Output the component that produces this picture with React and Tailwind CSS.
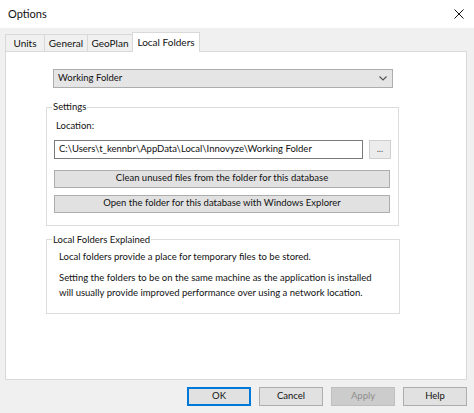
import React from 'react'

const font = { fontFamily: 'Lato, "Noto Sans", sans-serif' }

const Tab = ({ label, active, w }) => (
  <div
    className={
      active
        ? `${w} h-[20px] flex items-center justify-center bg-white border border-[#d9d9d9] border-b-0 -mb-px z-10 relative text-[10px]`
        : `${w} h-[17px] flex items-center justify-center bg-[#f0f0f0] border border-[#d9d9d9] border-b-0 -mr-px text-[10px]`
    }
  >
    {label}
  </div>
)

const Btn = ({ children, className = '' }) => (
  <div
    className={`h-[17px] flex items-center justify-center bg-[#e1e1e1] border border-[#adadad] ${className}`}
  >
    {children}
  </div>
)

const App = () => {
  return (
    <div
      className="w-[474px] h-[413px] bg-[#f0f0f0] text-[9.5px] text-[#111] overflow-hidden flex flex-col"
      style={font}
    >
      {/* title bar */}
      <div className="h-[28px] bg-white flex items-center justify-between pl-[8px] pr-[10px] shrink-0">
        <span className="text-[11px]">Options</span>
        <svg width="10" height="10" viewBox="0 0 10 10">
          <path d="M0.5 0.5 L9.5 9.5 M9.5 0.5 L0.5 9.5" stroke="#111" strokeWidth="1" />
        </svg>
      </div>

      {/* tabs */}
      <div className="flex items-end ml-[5px] mt-[5px] h-[18px]">
        <Tab label="Units" w="w-[40px]" />
        <Tab label="General" w="w-[44px]" />
        <Tab label="GeoPlan" w="w-[46px]" />
        <Tab label="Local Folders" w="w-[68px]" active />
      </div>

      {/* panel */}
      <div className="ml-[5px] w-[462px] h-[329px] bg-white border border-[#d9d9d9] pl-[40px] pt-[17px]">
        <div className="ml-[7px] w-[340px] h-[19px] bg-[#e5e5e5] border border-[#adadad] flex items-center justify-between pl-[4px] pr-[5px]">
          <span>Working Folder</span>
          <svg width="8" height="5" viewBox="0 0 8 5">
            <path d="M0.5 0.5 L4 4 L7.5 0.5" stroke="#555" strokeWidth="1.2" fill="none" />
          </svg>
        </div>

        <fieldset className="mt-[12px] w-[352px] border border-[#dcdcdc] px-[7px] pb-[12px]">
          <legend className="px-[1px] -ml-[2px]">Settings</legend>
          <div className="mt-[5px] ml-[2px]">Location:</div>
          <div className="mt-[6px] flex gap-[6px]">
            <div className="w-[309px] h-[19px] border border-[#7a7a7a] bg-white flex items-center pl-[4px]">
              C:\Users\t_kennbr\AppData\Local\Innovyze\Working Folder
            </div>
            <Btn className="w-[22px] !h-[19px] border-[#cfcfcf] bg-[#ececec] text-[#555]">...</Btn>
          </div>
          <Btn className="mt-[11px] w-[336px] !h-[18px]">Clean unused files from the folder for this database</Btn>
          <Btn className="mt-[7px] w-[336px] !h-[18px]">Open the folder for this database with Windows Explorer</Btn>
        </fieldset>

        <fieldset className="mt-[7px] w-[354px] border border-[#dcdcdc] px-[12px] pb-[13px]">
          <legend className="px-[1px] -ml-[7px]">Local Folders Explained</legend>
          <div className="mt-[3px]">Local folders provide a place for temporary files to be stored.</div>
          <div className="mt-[6px] leading-[15px]">
            Setting the folders to be on the same machine as the application is installed
            <br />
            will usually provide improved performance over using a network location.
          </div>
        </fieldset>
      </div>

      {/* bottom buttons */}
      <div className="flex justify-end gap-[8px] pr-[7px] mt-[7px]">
        <Btn className="w-[64px] !h-[19px] !border-[#0078d7] !border-2">OK</Btn>
        <Btn className="w-[64px] !h-[19px]">Cancel</Btn>
        <Btn className="w-[64px] !h-[19px] !bg-[#cccccc] !border-[#bfbfbf] text-[#8c8c8c]">Apply</Btn>
        <Btn className="w-[64px] !h-[19px]">Help</Btn>
      </div>
    </div>
  )
}

export default App
